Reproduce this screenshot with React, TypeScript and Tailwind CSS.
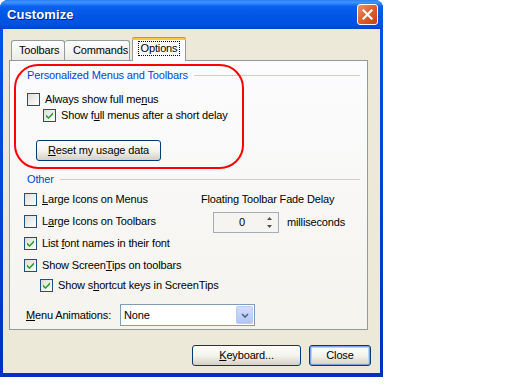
import React from "react";

const font = { fontFamily: '"Liberation Sans", Arial, sans-serif', letterSpacing: "-0.15px" };

function Check() {
  return (
    <svg width="9" height="9" viewBox="0 0 9 9" className="block">
      <path d="M1 3.5 L3.5 6 L8 1.2 L8 3.5 L3.5 8 L1 5.7 Z" fill="#21a121" />
    </svg>
  );
}

function Box({ checked }: { checked?: boolean }) {
  return (
    <div className="w-[13px] h-[13px] shrink-0 border border-[#1c5180] bg-gradient-to-br from-[#dcdcd7] to-[#ffffff] flex items-center justify-center">
      {checked && <Check />}
    </div>
  );
}

function CB({ checked, children }: { checked?: boolean; children: React.ReactNode }) {
  return (
    <div className="flex items-center h-[13px]">
      <Box checked={checked} />
      <span className="ml-[5px] text-[11px] leading-[13px] text-black whitespace-nowrap">{children}</span>
    </div>
  );
}

function XPButton({ children, w, def }: { children: React.ReactNode; w: string; def?: boolean }) {
  return (
    <div
      className={`${w} h-[21px] rounded-[3px] border border-[#003c74] bg-gradient-to-b from-[#ffffff] via-[#f4f3ee] to-[#d6d0c5] flex items-center justify-center text-[11px] text-black ${def ? "shadow-[inset_0_0_0_1px_#7ba2e7,inset_0_0_0_2px_#bcd4f6]" : ""}`}
    >
      {children}
    </div>
  );
}

export default function App() {
  return (
    <div className="w-[523px] h-[385px] bg-white" style={font}>
      <div className="w-[383px] h-[377px] flex flex-col rounded-t-[8px] overflow-hidden bg-gradient-to-b from-[#0055ea] to-[#0030c0]">
        {/* Title bar */}
        <div className="h-[29px] shrink-0 flex items-center pl-[7px] pr-[5px] bg-[linear-gradient(to_bottom,#2f7cf6_0%,#3d95ff_8%,#0a61ee_22%,#0055e5_55%,#0052e0_85%,#0043cf_100%)]">
          <span className="text-white font-bold text-[13px] [text-shadow:1px_1px_0_#0a1f80] tracking-[0.1px]">Customize</span>
          <div className="ml-auto w-[21px] h-[21px] rounded-[3px] border border-white bg-gradient-to-br from-[#f0906a] via-[#e45a2c] to-[#cc3f18] flex items-center justify-center">
            <svg width="11" height="11" viewBox="0 0 11 11">
              <path d="M1.5 1.5 L9.5 9.5 M9.5 1.5 L1.5 9.5" stroke="white" strokeWidth="2.2" strokeLinecap="square" />
            </svg>
          </div>
        </div>
        {/* Body */}
        <div className="flex-1 ml-[3px] mr-[3px] mb-[4px] bg-[#ece9d8] flex flex-col pl-[6px]">
          {/* Tabs */}
          <div className="h-[23px] mt-[8px] flex items-end text-[11px] text-black">
            <div className="ml-[2px] w-[54px] h-[20px] border border-b-0 border-[#919b9c] rounded-t-[3px] bg-gradient-to-b from-[#ffffff] to-[#ecebe6] flex items-center pl-[7px]">
              Toolbars
            </div>
            <div className="w-[65px] h-[20px] border border-b-0 border-l-0 border-[#919b9c] rounded-t-[3px] bg-gradient-to-b from-[#ffffff] to-[#ecebe6] flex items-center pl-[8px]">
              Commands
            </div>
            <div className="ml-[2px] w-[54px] h-[24px] -mb-[1px] relative z-10 border border-b-0 border-[#919b9c] rounded-t-[3px] bg-[#fcfcfe] flex flex-col">
              <div className="h-[3px] -mx-[1px] -mt-[1px] rounded-t-[3px] bg-[#ffc83c] border-t border-[#e68b2c]" />
              <div className="flex-1 flex items-start justify-center pt-[1px]">
                <span className="border border-dotted border-black px-[2px] leading-[13px]">Options</span>
              </div>
            </div>
          </div>
          {/* Panel */}
          <div className="w-[359px] h-[270px] relative border border-[#919b9c] bg-gradient-to-b from-[#fcfcfe] to-[#f4f3ee] flex flex-col text-[11px] text-black">
            {/* Section 1 */}
            <div className="flex items-center mt-[8px] pl-[17px] pr-[7px] h-[13px]">
              <span className="text-[#0046d5] leading-[13px] whitespace-nowrap">Personalized Menus and Toolbars</span>
              <div className="flex-1 h-px bg-[#d0d0bf] ml-[6px]" />
            </div>
            <div className="mt-[11px] pl-[17px]">
              <CB>
                Always show full me<u>n</u>us
              </CB>
            </div>
            <div className="mt-[3px] pl-[33px]">
              <CB checked>
                Show f<u>u</u>ll menus after a short delay
              </CB>
            </div>
            <div className="mt-[18px] pl-[26px]">
              <XPButton w="w-[125px]">
                <span>
                  <u>R</u>eset my usage data
                </span>
              </XPButton>
            </div>
            {/* Section 2 */}
            <div className="flex items-center mt-[12px] pl-[17px] pr-[7px] h-[13px]">
              <span className="text-[#0046d5] leading-[13px]">Other</span>
              <div className="flex-1 h-px bg-[#d0d0bf] ml-[6px]" />
            </div>
            <div className="flex mt-[7px]">
              <div className="flex flex-col pl-[14px] w-[190px] gap-[9px]">
                <CB>
                  <u>L</u>arge Icons on Menus
                </CB>
                <CB>
                  L<u>a</u>rge Icons on Toolbars
                </CB>
                <CB checked>
                  List <u>f</u>ont names in their font
                </CB>
                <CB checked>
                  Show Screen<u>T</u>ips on toolbars
                </CB>
              </div>
              <div className="flex flex-col">
                <div className="h-[13px] leading-[13px] whitespace-nowrap ml-[1px]">Floating Toolbar Fade Delay</div>
                <div className="flex items-center mt-[6px]">
                  <div className="ml-[13px] w-[66px] h-[21px] border border-[#a5acb5] bg-[#f5f4f0] flex items-center">
                    <span className="flex-1 text-center pl-[8px]">0</span>
                    <div className="w-[15px] flex flex-col items-center gap-[5px] mr-[1px]">
                      <svg width="5" height="3" viewBox="0 0 5 3">
                        <path d="M0 3 L2.5 0 L5 3 Z" fill="#4d4d4d" />
                      </svg>
                      <svg width="5" height="3" viewBox="0 0 5 3">
                        <path d="M0 0 L2.5 3 L5 0 Z" fill="#4d4d4d" />
                      </svg>
                    </div>
                  </div>
                  <span className="ml-[8px]">milliseconds</span>
                </div>
              </div>
            </div>
            <div className="mt-[7px] pl-[30px]">
              <CB checked>
                Show s<u>h</u>ortcut keys in ScreenTips
              </CB>
            </div>
            <div className="flex items-center mt-[12px] pl-[16px]">
              <span className="w-[94px]">
                <u>M</u>enu Animations:
              </span>
              <div className="w-[135px] h-[22px] border border-[#7f9db9] bg-white flex items-center p-[1px]">
                <span className="flex-1 pl-[2px]">None</span>
                <div className="w-[17px] h-full rounded-[2px] bg-gradient-to-b from-[#d2defc] to-[#b0c6f5] border border-[#b8cdf7] flex items-center justify-center">
                  <svg width="8" height="5" viewBox="0 0 8 5">
                    <path d="M1 1 L4 4 L7 1" stroke="#4d6185" strokeWidth="1.6" fill="none" />
                  </svg>
                </div>
              </div>
            </div>
            {/* Red annotation */}
            <div className="absolute left-[4px] top-[3px] w-[230px] h-[105px] border-2 border-[#ff0000] rounded-[24px]" />
          </div>
          {/* Buttons */}
          <div className="flex mt-[15px] pl-[183px]">
            <XPButton w="w-[109px]">
              <span>
                <u>K</u>eyboard...
              </span>
            </XPButton>
            <div className="ml-[8px]">
              <XPButton w="w-[62px]" def>
                Close
              </XPButton>
            </div>
          </div>
        </div>
      </div>
    </div>
  );
}
